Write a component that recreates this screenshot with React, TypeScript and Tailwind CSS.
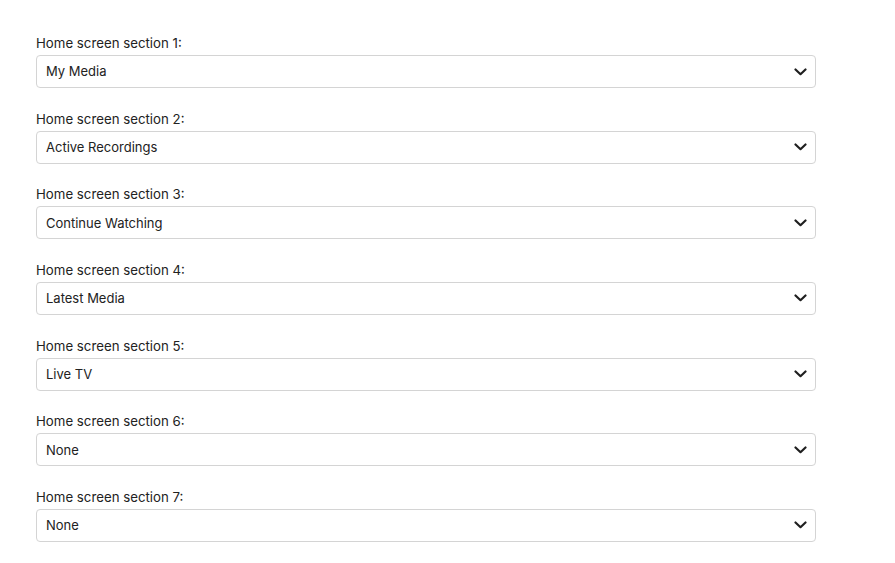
const sections = [
  'My Media',
  'Active Recordings',
  'Continue Watching',
  'Latest Media',
  'Live TV',
  'None',
  'None',
];

function Chevron() {
  return (
    <svg width="13" height="8" viewBox="0 0 13 8" fill="none" className="shrink-0">
      <path d="M1.5 1.5 6.5 6.2 11.5 1.5" stroke="#1f1f1f" strokeWidth="2.2" strokeLinecap="round" strokeLinejoin="round" />
    </svg>
  );
}

export default function App() {
  return (
    <div className="min-h-screen bg-white pl-[36px] pt-[34px] text-[#1d1d1f]" style={{ fontFamily: 'Inter, "Noto Sans", sans-serif' }}>
      <div className="flex w-[780px] flex-col gap-[21.67px]">
        {sections.map((value, i) => (
          <div key={i} className="flex flex-col">
            <label className="mb-[3px] text-[13.25px] leading-[18px] text-[#222]">
              Home screen section {i + 1}:
            </label>
            <div className="flex h-[33px] items-center justify-between rounded-[4px] border border-[#d4d4d4] bg-white pl-[9px] pr-[8px] text-[13px] text-[#222]">
              <span className="pt-px">{value}</span>
              <Chevron />
            </div>
          </div>
        ))}
      </div>
    </div>
  );
}
